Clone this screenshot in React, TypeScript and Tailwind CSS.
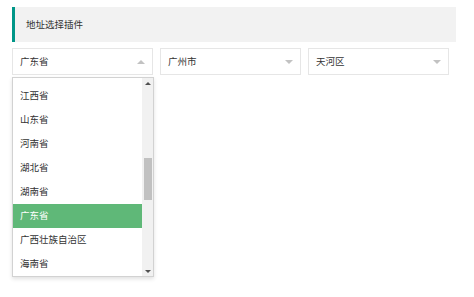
const provinces = [
  "江西省",
  "山东省",
  "河南省",
  "湖北省",
  "湖南省",
  "广东省",
  "广西壮族自治区",
  "海南省",
]

function Caret({ up }: { up?: boolean }) {
  return up ? (
    <span className="h-0 w-0 border-x-[4px] border-b-[4px] border-x-transparent border-b-[#c2c2c2]" />
  ) : (
    <span className="h-0 w-0 border-x-[4px] border-t-[4px] border-x-transparent border-t-[#c2c2c2]" />
  )
}

function SelectBox({ value, open }: { value: string; open?: boolean }) {
  return (
    <div className="flex h-[27px] w-[141px] items-center justify-between border border-[#e6e6e6] bg-white pl-[7px] pr-[7px] text-[#333]">
      <span>{value}</span>
      <Caret up={open} />
    </div>
  )
}

export default function App() {
  return (
    <div
      className="h-[297px] w-[474px] bg-white pl-3 pt-[7px] text-[9.5px] leading-none"
      style={{ fontFamily: '"Noto Sans CJK SC", "Noto Sans", sans-serif' }}
    >
      <div className="flex h-[35px] w-[444px] items-center border-l-[3px] border-[#009688] bg-[#f2f2f2] pl-[11px] text-[#333]">
        地址选择插件
      </div>

      <div className="mt-[6px] flex gap-[7px]">
        <div className="relative">
          <SelectBox value="广东省" open />
          <div className="absolute left-0 top-[29px] z-10 flex h-[200px] w-[142px] border border-[#d2d2d2] bg-white shadow-[0_2px_4px_rgba(0,0,0,0.12)]">
            <div className="flex-1 overflow-hidden">
              {/* list is scrolled: only the bottom edge of the previous row shows */}
              <div className="flex flex-col pt-[6px]">
                {provinces.map((p) => (
                  <div
                    key={p}
                    className={
                      p === "广东省"
                        ? "flex h-[24px] items-center bg-[#5fb878] pl-[7px] text-white"
                        : "flex h-[24px] items-center pl-[7px] text-[#333]"
                    }
                  >
                    {p}
                  </div>
                ))}
              </div>
            </div>
            <div className="flex w-[11px] flex-col items-center bg-[#f1f1f1]">
              <div className="flex h-[10px] items-center justify-center">
                <span className="h-0 w-0 border-x-[3px] border-b-[3px] border-x-transparent border-b-[#505050]" />
              </div>
              <div className="mt-[70px] h-[42px] w-[8px] bg-[#c1c1c1]" />
              <div className="flex-1" />
              <div className="flex h-[10px] items-center justify-center">
                <span className="h-0 w-0 border-x-[3px] border-t-[3px] border-x-transparent border-t-[#505050]" />
              </div>
            </div>
          </div>
        </div>
        <SelectBox value="广州市" />
        <SelectBox value="天河区" />
      </div>
    </div>
  )
}
